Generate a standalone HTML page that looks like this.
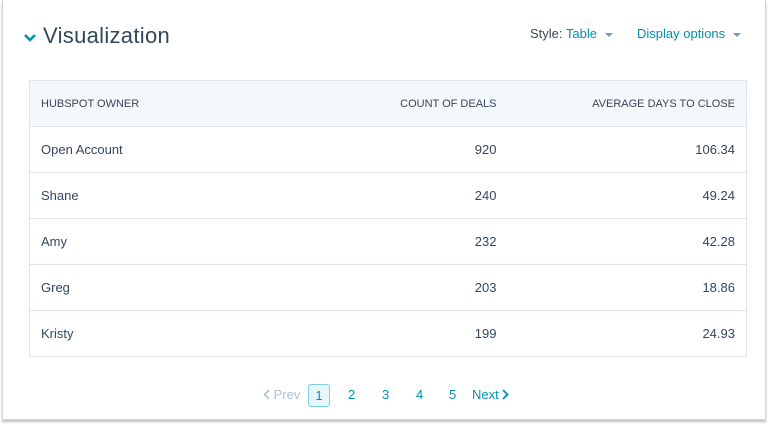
<!DOCTYPE html>
<html><head><style>
body{margin:0;width:768px;height:424px;background:#fff;font-family:"Liberation Sans",sans-serif;position:relative;overflow:hidden}
.card{position:absolute;left:2px;top:0;width:762px;height:419px;border:1px solid #d6d6d6;border-top:none;box-shadow:0 2px 2px rgba(0,0,0,.25);background:#fff}
.title{position:absolute;left:43px;top:23px;font-size:22px;color:#33475b;letter-spacing:.3px}
.chev{position:absolute;left:23px;top:33px}
.opt{position:absolute;top:26px;font-size:13px;color:#0091ae}
.caret{display:inline-block;width:0;height:0;border-left:4px solid transparent;border-right:4px solid transparent;border-top:4px solid #7c98b6;margin-left:8px;vertical-align:middle}
table{position:absolute;left:29px;top:80px;width:718px;border-collapse:collapse;font-size:13px;color:#33475b;border:1px solid #dfe3eb}
th{height:45px;background:#f5f8fa;font-size:11px;font-weight:normal;text-align:left;padding:0 11px;border-bottom:1px solid #dfe3eb;color:#33475b}
td{height:45px;padding:0 11px;border-bottom:1px solid #dfe3eb}
.r{text-align:right}
.pg{position:absolute;top:387px;font-size:13px;color:#0091ae}
</style></head><body>
<div class="card"></div>
<svg class="chev" width="14" height="10" viewBox="0 0 14 10"><path d="M2 2 L7 7 L12 2" stroke="#0091ae" stroke-width="2.6" fill="none"/></svg>
<div class="title">Visualization</div>
<div class="opt" style="left:530px"><span style="color:#33475b">Style:</span> Table<span class="caret"></span></div>
<div class="opt" style="left:637px">Display options<span class="caret"></span></div>
<table>
<colgroup><col style="width:300px"><col style="width:178px"><col></colgroup>
<tr><th>HUBSPOT OWNER</th><th class="r">COUNT OF DEALS</th><th class="r">AVERAGE DAYS TO CLOSE</th></tr>
<tr><td>Open Account</td><td class="r">920</td><td class="r">106.34</td></tr>
<tr><td>Shane</td><td class="r">240</td><td class="r">49.24</td></tr>
<tr><td>Amy</td><td class="r">232</td><td class="r">42.28</td></tr>
<tr><td>Greg</td><td class="r">203</td><td class="r">18.86</td></tr>
<tr><td>Kristy</td><td class="r">199</td><td class="r">24.93</td></tr>
</table>
<div class="pg" style="left:263px;color:#b0c1d4"><svg width="7" height="11" viewBox="0 0 7 11" style="vertical-align:-1px"><path d="M6 1 L1.5 5.5 L6 10" stroke="#b0c1d4" stroke-width="1.6" fill="none"/></svg> Prev</div>
<div style="position:absolute;left:308px;top:384px;width:20px;height:21px;border:1px solid #7fd1de;background:#e5f5f8;border-radius:3px;text-align:center;line-height:21px;font-size:13px;color:#0091ae">1</div>
<div class="pg" style="left:348px">2</div>
<div class="pg" style="left:382px">3</div>
<div class="pg" style="left:416px">4</div>
<div class="pg" style="left:449px">5</div>
<div class="pg" style="left:472px">Next <svg width="7" height="11" viewBox="0 0 7 11" style="vertical-align:-1px"><path d="M1 1 L5.5 5.5 L1 10" stroke="#0091ae" stroke-width="1.8" fill="none"/></svg></div>
</body></html>
